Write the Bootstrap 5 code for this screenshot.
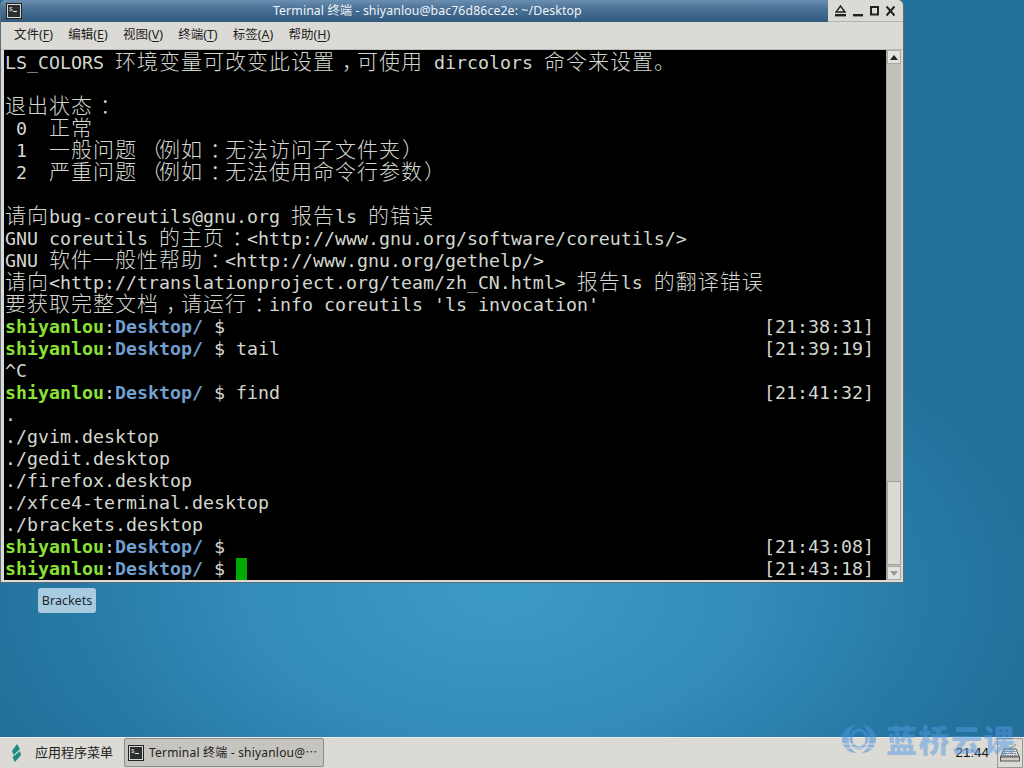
<!DOCTYPE html>
<html lang="zh-CN">
<head>
<meta charset="utf-8">
<title>Terminal</title>
<link href="https://cdn.jsdelivr.net/npm/bootstrap@5.3.0/dist/css/bootstrap.min.css" rel="stylesheet">
<style>
html,body{height:100%;margin:0;overflow:hidden}
body{font-family:"Noto Sans","Noto Sans CJK SC",sans-serif;background:#dcdad5}
.desk{width:1024px;height:768px;background:radial-gradient(ellipse 560px 330px at 500px 590px,#3c9ac9 0%,#338cbb 45%,#277aa6 75%,#226f99 100%)}
.winbox{width:904px;height:583px;background:#dcdad5;border:1px solid #5f6d78;border-top:0;border-radius:6px 6px 0 0;overflow:hidden}
.titlebar{height:22px;background:linear-gradient(180deg,#6b8fb0 0%,#4a7296 40%,#2f597d 100%)}
.titlelabel{color:#f0f3f6;font-size:12.3px;letter-spacing:.1px;line-height:22px;margin-left:251px;width:340px;white-space:nowrap}
.termicon{width:16px;height:16px;margin:3px 0 0 5px}
.winctl{width:75px;height:22px;background:#dcdad5;border-bottom:1px solid #b5b3ad;margin-left:auto;gap:7px;padding-left:7px}
.menubar{height:28px;padding-left:13px;font-size:12.5px;color:#222;gap:15.2px;border-bottom:1px solid #bdbbb5}
.menubar u{text-underline-offset:2px}
.termzone{height:530px;margin-left:3px;margin-right:1px}
.screen{width:882px;height:530px;background:#000;color:#d3d7cf;font-family:"DejaVu Sans Mono",monospace;font-size:18.27px;padding:2px 12px 0 1px}
.tl{height:22px;line-height:22px;white-space:pre}
.z,.p,.pl,.pr{font-family:"Noto Sans CJK SC",sans-serif;font-size:21px;line-height:0;font-weight:300}
.z{letter-spacing:1px}
.p,.pl,.pr{display:inline-block;overflow:visible;white-space:pre}
.p{width:22px;text-indent:7px}
.pl{width:11px;text-indent:-7px}
.pr{width:11px;text-indent:1px}
.ug{color:#8ae234;font-weight:700}
.ub{color:#729fcf;font-weight:700}
.caret{display:inline-block;width:11px;height:22px;background:#00aa00;vertical-align:top}
.sbar{width:15px;height:530px;background:#c2c0bb;border-left:1px solid #aaa8a2}
.sbtn{height:14px;background:#e4e2de;border:1px solid #a9a79f}
.sthumb{height:84px;margin-top:417px;background:#dcdad5;border:1px solid #a3a19a}
.gap0{flex:1}
.desklabel{width:58px;height:25px;margin:5px 0 0 38px;background:#a9cbe0;border-radius:3px;color:#1a2a33;font-size:12.5px;line-height:25px;text-align:center;position:relative}
.desklabel::before{content:"";position:absolute;left:7px;top:-5px;width:44px;height:2px;background:#2d6ea8}
.panelarea{height:31px;background:#dcdad5;border-top:1px solid #eeece8;position:relative}
.appmenu{width:124px;font-size:13px;color:#222;padding-left:7px;gap:10px}
.taskbtn{width:200px;height:29px;background:#c6c4bf;border:1px solid #8f8d88;border-radius:2px;font-size:12px;color:#222;padding-left:3px;gap:5px;white-space:nowrap;overflow:hidden;letter-spacing:.2px}
.clockface{font-family:"Liberation Sans",sans-serif;font-size:13.4px;color:#111;margin-left:auto;margin-top:5px;margin-right:8px}
.kbdbox{width:26px;height:30px;border:1px solid #9a9893;margin-right:1px}
.markwrap{position:absolute;left:837px;top:723px;gap:5px;pointer-events:none}
.marktxt{font-family:"Noto Sans CJK SC",sans-serif;font-weight:900;font-size:31px;line-height:32px;letter-spacing:1.5px;color:#5599e2;opacity:.5}
.marklogo{opacity:.55}
</style>
</head>
<body>
<div class="desk d-flex flex-column">
  <div class="winbox d-flex flex-column flex-shrink-0">
    <div class="titlebar d-flex flex-shrink-0">
      <svg class="termicon flex-shrink-0" viewBox="0 0 16 16"><rect x=".5" y=".5" width="15" height="15" fill="#d8d8d4" stroke="#222"/><rect x="2" y="2" width="12" height="12" fill="#2c2f30"/><text x="3" y="8" font-size="6" fill="#eee" font-family="Liberation Mono">$</text><rect x="7" y="8" width="4" height="1" fill="#eee"/></svg>
      <div class="titlelabel">Terminal 终端 - shiyanlou@bac76d86ce2e: ~/Desktop</div>
      <div class="winctl d-flex align-items-center flex-shrink-0">
        <svg width="11" height="14" viewBox="0 0 11 14"><path d="M5.500 2 10 8H1z" fill="none" stroke="#222" stroke-width="1.400"/><rect x="0" y="10" width="11" height="2.400" fill="#222"/></svg>
        <svg width="10" height="14" viewBox="0 0 10 14"><rect x="0" y="10" width="10" height="2.400" fill="#222"/></svg>
        <svg width="9" height="14" viewBox="0 0 9 14"><rect x="1" y="3" width="7" height="7.500" fill="none" stroke="#222" stroke-width="2"/></svg>
        <svg width="9" height="14" viewBox="0 0 9 14"><path d="M.5 2.500 8.500 11.500M8.500 2.500 .5 11.500" stroke="#222" stroke-width="2"/></svg>
      </div>
    </div>
    <div class="menubar d-flex align-items-center flex-shrink-0">
      <span>文件(<u>F</u>)</span><span>编辑(<u>E</u>)</span><span>视图(<u>V</u>)</span><span>终端(<u>T</u>)</span><span>标签(<u>A</u>)</span><span>帮助(<u>H</u>)</span>
    </div>
    <div class="termzone d-flex">
      <div class="screen flex-shrink-0">
<div class="tl">LS_COLORS <span class="z">环境变量可改变此设置</span><span class="p">，</span><span class="z">可使用</span> dircolors <span class="z">命令来设置。</span></div>
<div class="tl"> </div>
<div class="tl"><span class="z">退出状态</span><span class="p">：</span></div>
<div class="tl"> 0  <span class="z">正常</span></div>
<div class="tl"> 1  <span class="z">一般问题</span> <span class="pl">（</span><span class="z">例如</span><span class="p">：</span><span class="z">无法访问子文件夹</span><span class="pr">）</span></div>
<div class="tl"> 2  <span class="z">严重问题</span> <span class="pl">（</span><span class="z">例如</span><span class="p">：</span><span class="z">无法使用命令行参数</span><span class="pr">）</span></div>
<div class="tl"> </div>
<div class="tl"><span class="z">请向</span>bug-coreutils@gnu.org <span class="z">报告</span>ls <span class="z">的错误</span></div>
<div class="tl">GNU coreutils <span class="z">的主页</span><span class="p">：</span>&lt;http://www.gnu.org/software/coreutils/&gt;</div>
<div class="tl">GNU <span class="z">软件一般性帮助</span><span class="p">：</span>&lt;http://www.gnu.org/gethelp/&gt;</div>
<div class="tl"><span class="z">请向</span>&lt;http://translationproject.org/team/zh_CN.html&gt; <span class="z">报告</span>ls <span class="z">的翻译错误</span></div>
<div class="tl"><span class="z">要获取完整文档</span><span class="p">，</span><span class="z">请运行</span><span class="p">：</span>info coreutils 'ls invocation'</div>
<div class="tl d-flex"><span><span class="ug">shiyanlou</span>:<span class="ub">Desktop/</span> $</span><span class="ms-auto">[21:38:31]</span></div>
<div class="tl d-flex"><span><span class="ug">shiyanlou</span>:<span class="ub">Desktop/</span> $ tail</span><span class="ms-auto">[21:39:19]</span></div>
<div class="tl">^C</div>
<div class="tl d-flex"><span><span class="ug">shiyanlou</span>:<span class="ub">Desktop/</span> $ find</span><span class="ms-auto">[21:41:32]</span></div>
<div class="tl">.</div>
<div class="tl">./gvim.desktop</div>
<div class="tl">./gedit.desktop</div>
<div class="tl">./firefox.desktop</div>
<div class="tl">./xfce4-terminal.desktop</div>
<div class="tl">./brackets.desktop</div>
<div class="tl d-flex"><span><span class="ug">shiyanlou</span>:<span class="ub">Desktop/</span> $</span><span class="ms-auto">[21:43:08]</span></div>
<div class="tl d-flex"><span><span class="ug">shiyanlou</span>:<span class="ub">Desktop/</span> $ <span class="caret"></span></span><span class="ms-auto">[21:43:18]</span></div>
      </div>
      <div class="sbar d-flex flex-column flex-shrink-0">
        <div class="sbtn d-flex align-items-center justify-content-center"><svg width="8" height="5" viewBox="0 0 8 5"><path d="M4 0 8 5H0z" fill="#222"/></svg></div>
        <div class="sthumb"></div>
        <div class="gap0"></div>
        <div class="sbtn d-flex align-items-center justify-content-center"><svg width="8" height="5" viewBox="0 0 8 5"><path d="M0 0H8L4 5z" fill="#9a9893"/></svg></div>
      </div>
    </div>
  </div>
  <div class="desklabel">Brackets</div>
  <div class="gap0"></div>
  <div class="panelarea d-flex flex-shrink-0">
    <div class="appmenu d-flex align-items-center flex-shrink-0">
      <svg width="18" height="20" viewBox="0 0 18 20"><path d="M10 1 13 6 6.500 12 5 8zM13 8 14 12 8 19 5.500 14z" fill="#1f8a82"/></svg>
      <span>应用程序菜单</span>
    </div>
    <div class="taskbtn d-flex align-items-center flex-shrink-0">
      <svg width="16" height="16" viewBox="0 0 16 16"><rect x=".5" y=".5" width="15" height="15" fill="#d8d8d4" stroke="#222"/><rect x="2" y="2" width="12" height="12" fill="#2c2f30"/><text x="3" y="8" font-size="6" fill="#eee" font-family="Liberation Mono">$</text><rect x="7" y="8" width="4" height="1" fill="#eee"/></svg>
      <span>Terminal 终端 - shiyanlou@⋯</span>
    </div>
    <div class="clockface">21:44</div>
    <div class="kbdbox d-flex align-items-center justify-content-center flex-shrink-0">
      <svg width="22" height="22" viewBox="0 0 22 22"><path d="M11 7C11 4 15 6 17 2" fill="none" stroke="#777"/><path d="M5 7H17L20.500 15H1.500z" fill="#e8e6e2" stroke="#555"/><rect x="1.500" y="15" width="19" height="4" fill="#cfcdc8" stroke="#555"/><path d="M5 9.500H17M4 11.500H18M3.500 13.500H18.500" stroke="#666" stroke-dasharray="1.500 .8"/></svg>
    </div>
  </div>
</div>
<div class="markwrap d-flex align-items-center">
  <svg class="marklogo" width="44" height="32" viewBox="0 0 44 32"><path d="M19 2A14 14 0 1 0 19 30 17 17 0 0 1 19 2z" fill="#4d93de"/><ellipse cx="22" cy="16" rx="8" ry="9" fill="none" stroke="#4d93de" stroke-width="3"/><path d="M25 2A14 14 0 1 1 25 30 17 17 0 0 0 25 2z" fill="#4d93de"/><path d="M2 21H42M4 25H40" stroke="#dcdad5" stroke-width="1"/></svg>
  <span class="marktxt">蓝桥云课</span>
</div>
</body>
</html>
